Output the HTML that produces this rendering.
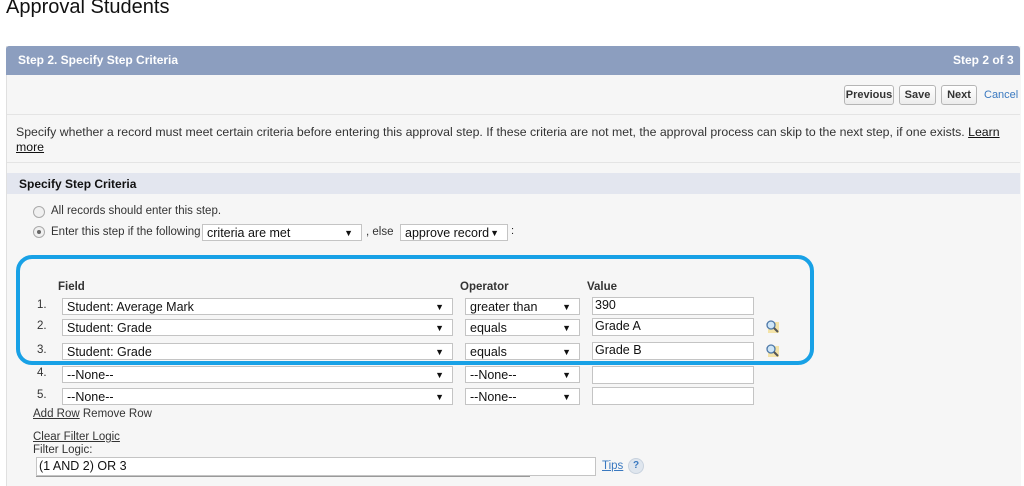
<!DOCTYPE html>
<html><head><style>
body{margin:0;width:1024px;height:478px;overflow:hidden;background:#fff;font-family:"Liberation Sans",Arial,sans-serif;position:relative;color:#222}
.a{position:absolute}
.sel{position:absolute;background:#fff;border:1px solid #c4c4c4;height:17px;box-sizing:border-box;font-size:12.5px;line-height:16px;padding-left:4px;color:#111}
.sel:after{content:"▼";position:absolute;right:8px;top:0;font-size:9px}
.inp{position:absolute;background:#fff;border:1px solid #c4c4c4;height:18px;box-sizing:border-box;font-size:12.5px;line-height:15px;padding-left:2px;color:#111}
.btn{position:absolute;top:85px;height:20px;box-sizing:border-box;border:1px solid #b5b5b5;border-radius:3px;background:linear-gradient(#fff,#ececec);font-size:11px;font-weight:bold;line-height:18px;text-align:center;color:#333}
.n{position:absolute;left:37px;font-size:11.5px;color:#333}
.mag{position:absolute;left:765px;width:14px;height:13px}
.t{font-size:11.5px;color:#333}
</style></head><body>
<div class="a" style="left:6px;top:-4px;font-size:20px;color:#111">Approval Students</div>
<div class="a" style="left:6px;top:46px;width:1014px;height:440px;background:#f6f6f6;border-left:1px solid #e0e0e0"></div>
<div class="a" style="left:6px;top:46px;width:1014px;height:29px;background:#8c9ebf;border-radius:3px 3px 0 0"></div>
<div class="a" style="left:18px;top:53px;font-size:12px;font-weight:bold;color:#fff">Step 2. Specify Step Criteria</div>
<div class="a" style="left:953px;top:53px;font-size:12px;font-weight:bold;color:#fff">Step 2 of 3</div>
<div class="btn" style="left:844px;width:50px">Previous</div>
<div class="btn" style="left:899px;width:37px">Save</div>
<div class="btn" style="left:941px;width:36px">Next</div>
<div class="a" style="left:984px;top:89px;font-size:11px;color:#3a79c0">Cancel</div>
<div class="a" style="left:7px;top:114px;width:1013px;height:1px;background:#e4e4e4"></div>
<div class="a" style="left:16px;top:125px;width:1000px;font-size:12.3px;line-height:15px;color:#333">Specify whether a record must meet certain criteria before entering this approval step. If these criteria are not met, the approval process can skip to the next step, if one exists. <u style="color:#111">Learn more</u></div>
<div class="a" style="left:7px;top:162px;width:1013px;height:1px;background:#e4e4e4"></div>
<div class="a" style="left:7px;top:173px;width:1013px;height:21px;background:#e3e6ef"></div>
<div class="a" style="left:19px;top:177px;font-size:12px;font-weight:bold;color:#111">Specify Step Criteria</div>
<div class="a" style="left:33px;top:206px;width:10px;height:10px;border:1px solid #aaa;border-radius:50%;background:#f0f0f0"></div>
<div class="a t" style="left:51px;top:205px">All records should enter this step.</div>
<div class="a" style="left:33px;top:226px;width:10px;height:10px;border:1px solid #aaa;border-radius:50%;background:#f0f0f0"><div style="margin:3px;width:4px;height:4px;border-radius:50%;background:#666"></div></div>
<div class="a t" style="left:51px;top:226px">Enter this step if the following</div>
<div class="sel" style="left:202px;top:224px;width:160px">criteria are met</div>
<div class="a t" style="left:366px;top:226px">, else</div>
<div class="sel" style="left:400px;top:224px;width:108px">approve record</div>
<div class="a" style="left:511px;top:225px;font-size:11px">:</div>
<div class="a" style="left:16px;top:255px;width:798px;height:110px;box-sizing:border-box;border:4px solid #18a1e6;border-radius:16px"></div>
<div class="a" style="left:58px;top:281px;font-size:11.5px;font-weight:bold;color:#333">Field</div>
<div class="a" style="left:460px;top:281px;font-size:11.5px;font-weight:bold;color:#333">Operator</div>
<div class="a" style="left:587px;top:281px;font-size:11.5px;font-weight:bold;color:#333">Value</div>

<div class="n" style="top:299px">1.</div><div class="sel" style="left:62px;top:298px;width:391px">Student: Average Mark</div><div class="sel" style="left:465px;top:298px;width:115px">greater than</div><div class="inp" style="left:592px;top:297px;width:162px">390</div>
<div class="n" style="top:320px">2.</div><div class="sel" style="left:62px;top:319px;width:391px">Student: Grade</div><div class="sel" style="left:465px;top:319px;width:115px">equals</div><div class="inp" style="left:592px;top:318px;width:162px">Grade A</div>
<div class="n" style="top:344px">3.</div><div class="sel" style="left:62px;top:343px;width:391px">Student: Grade</div><div class="sel" style="left:465px;top:343px;width:115px">equals</div><div class="inp" style="left:592px;top:342px;width:162px">Grade B</div>
<div class="n" style="top:367px">4.</div><div class="sel" style="left:62px;top:366px;width:391px">--None--</div><div class="sel" style="left:465px;top:366px;width:115px">--None--</div><div class="inp" style="left:592px;top:366px;width:162px"></div>
<div class="n" style="top:389px">5.</div><div class="sel" style="left:62px;top:388px;width:391px">--None--</div><div class="sel" style="left:465px;top:388px;width:115px">--None--</div><div class="inp" style="left:592px;top:387px;width:162px"></div>

<svg class="mag" style="top:320px" viewBox="0 0 14 13"><rect x="3" y="2" width="11" height="11" fill="#f3e3a8"/><circle cx="6" cy="5" r="4" fill="#cfe6f7" stroke="#4d78a8" stroke-width="1.3"/><path d="M9 8l4 4" stroke="#555" stroke-width="2"/></svg>
<svg class="mag" style="top:344px" viewBox="0 0 14 13"><rect x="3" y="2" width="11" height="11" fill="#f3e3a8"/><circle cx="6" cy="5" r="4" fill="#cfe6f7" stroke="#4d78a8" stroke-width="1.3"/><path d="M9 8l4 4" stroke="#555" stroke-width="2"/></svg>

<div class="a t" style="left:33px;top:408px"><u>Add Row</u> Remove Row</div>
<div class="a t" style="left:33px;top:431px"><u>Clear Filter Logic</u></div>
<div class="a t" style="left:33px;top:444px">Filter Logic:</div>
<div class="inp" style="left:36px;top:457px;width:560px;height:19px;font-size:12.5px;line-height:17px">(1 AND 2) OR 3</div>
<div class="a" style="left:602px;top:460px;font-size:11.5px;color:#3a79c0"><u>Tips</u></div>
<div class="a" style="left:628px;top:458px;width:14px;height:14px;border-radius:50%;background:#dfe6ee;border:1px solid #c8d2de;font-size:10px;font-weight:bold;color:#3a79c0;text-align:center;line-height:14px">?</div>
<div class="a" style="left:36px;top:476px;width:494px;height:1px;background:#999"></div>
</body></html>
